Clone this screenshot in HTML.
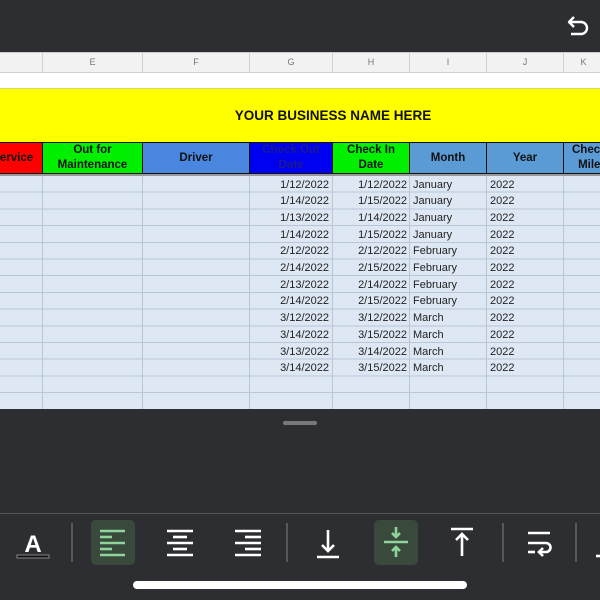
<!DOCTYPE html>
<html><head><meta charset="utf-8"><style>
*{margin:0;padding:0;box-sizing:border-box}
body{width:600px;height:600px;background:#2d2e32;position:relative;overflow:hidden;font-family:"Liberation Sans",sans-serif}
.a{position:absolute}
.ch{position:absolute;top:53px;height:19px;background:#f2f2f2;border-right:1px solid #d0d0d0;font-size:9px;color:#777;text-align:center;line-height:19px}
.hd{position:absolute;top:142px;height:32px;border:1.5px solid #111;font-size:11.5px;font-weight:bold;color:#111;display:flex;align-items:center;justify-content:center;text-align:center;line-height:15px}
.c{position:absolute;height:16.7px;font-size:11px;color:#222;line-height:16.7px;white-space:nowrap}
</style></head><body>
<svg class="a" style="left:566px;top:14px" width="26" height="26" viewBox="0 0 26 26"><path d="M8 3 L3 8 L8 13 M3 8 H15 A6 6 0 0 1 15 20 H5" fill="none" stroke="#fff" stroke-width="2.4" stroke-linejoin="round"/></svg>
<div class="a" style="left:0;top:52px;width:600px;height:357px;background:#fff"></div>
<div class="a" style="left:0;top:52px;width:600px;height:1px;background:#ccc"></div>
<div class="ch" style="left:0;width:43px"></div>
<div class="ch" style="left:43px;width:100px">E</div>
<div class="ch" style="left:143px;width:107px">F</div>
<div class="ch" style="left:250px;width:83px">G</div>
<div class="ch" style="left:333px;width:77px">H</div>
<div class="ch" style="left:410px;width:77px">I</div>
<div class="ch" style="left:487px;width:77px">J</div>
<div class="ch" style="left:564px;width:40px">K</div>
<div class="a" style="left:0;top:72px;width:600px;height:1px;background:#d0d0d0"></div>
<div class="a" style="left:0;top:88px;width:600px;height:54px;background:#ffff00;border-top:1px solid #d8d870;font-size:13.5px;font-weight:bold;color:#111;text-align:center;line-height:54px;padding-left:66px">YOUR BUSINESS NAME HERE</div>
<div class="hd" style="left:-10px;width:53px;background:#ff0000">ervice</div>
<div class="hd" style="left:42px;width:101px;background:#00f000">Out for<br>Maintenance</div>
<div class="hd" style="left:142px;width:108px;background:#4a86e0">Driver</div>
<div class="hd" style="left:249px;width:84px;background:#0000f0;color:#1a1a90">Check Out<br>Date</div>
<div class="hd" style="left:332px;width:78px;background:#00f000">Check In<br>Date</div>
<div class="hd" style="left:409px;width:78px;background:#5b9bd5">Month</div>
<div class="hd" style="left:486px;width:78px;background:#5b9bd5">Year</div>
<div class="hd" style="left:563px;width:60px;background:#5b9bd5;justify-content:flex-start;padding-left:8px">Check<br>Mile</div>
<div class="a" style="left:0;top:174px;width:600px;height:2px;background:#999"></div>
<div class="a" style="left:0;top:176px;width:600px;height:233px;background:#dde8f4;
background-image:repeating-linear-gradient(to bottom,transparent 0,transparent 15.7px,#b9c6d3 15.7px,#b9c6d3 16.7px)"></div>
<div class="a" style="left:42px;top:176px;width:1px;height:233px;background:#b9c6d3"></div>
<div class="a" style="left:142px;top:176px;width:1px;height:233px;background:#b9c6d3"></div>
<div class="a" style="left:249px;top:176px;width:1px;height:233px;background:#b9c6d3"></div>
<div class="a" style="left:332px;top:176px;width:1px;height:233px;background:#b9c6d3"></div>
<div class="a" style="left:409px;top:176px;width:1px;height:233px;background:#b9c6d3"></div>
<div class="a" style="left:486px;top:176px;width:1px;height:233px;background:#b9c6d3"></div>
<div class="a" style="left:563px;top:176px;width:1px;height:233px;background:#b9c6d3"></div>
<div id="d"></div>
<script>
var r=[["1/12/2022","1/12/2022","January"],["1/14/2022","1/15/2022","January"],["1/13/2022","1/14/2022","January"],["1/14/2022","1/15/2022","January"],["2/12/2022","2/12/2022","February"],["2/14/2022","2/15/2022","February"],["2/13/2022","2/14/2022","February"],["2/14/2022","2/15/2022","February"],["3/12/2022","3/12/2022","March"],["3/14/2022","3/15/2022","March"],["3/13/2022","3/14/2022","March"],["3/14/2022","3/15/2022","March"]];
var h="";r.forEach(function(x,i){var t=176.5+i*16.7;
h+='<div class="c" style="left:250px;width:79px;text-align:right;top:'+t+'px">'+x[0]+'</div>';
h+='<div class="c" style="left:333px;width:74px;text-align:right;top:'+t+'px">'+x[1]+'</div>';
h+='<div class="c" style="left:413px;top:'+t+'px">'+x[2]+'</div>';
h+='<div class="c" style="left:490px;top:'+t+'px">2022</div>';});
document.getElementById("d").innerHTML=h;
</script>
<div class="a" style="left:283px;top:421px;width:34px;height:4px;border-radius:2px;background:#77787c"></div>
<div class="a" style="left:0;top:513px;width:600px;height:1px;background:#55565a"></div>
<svg class="a" style="left:0;top:514px" width="600" height="86" viewBox="0 514 600 86">
<g fill="none" stroke-linecap="butt">
<text x="33" y="552" font-family="Liberation Sans" font-size="24" font-weight="bold" fill="#fff" text-anchor="middle">A</text>
<rect x="17" y="555" width="32" height="3" fill="#111" stroke="#888" stroke-width="1"/>
<line x1="72" y1="523" x2="72" y2="562" stroke="#666" stroke-width="1.5"/>
<rect x="91" y="520" width="44" height="45" rx="5" fill="#394a3d"/>
<g stroke="#8fd49a" stroke-width="2.6"><line x1="100" y1="531" x2="125" y2="531"/><line x1="100" y1="537" x2="112" y2="537"/><line x1="100" y1="543" x2="125" y2="543"/><line x1="100" y1="549" x2="112" y2="549"/><line x1="100" y1="555" x2="125" y2="555"/></g>
<g stroke="#fff" stroke-width="2.6"><line x1="167" y1="531" x2="193" y2="531"/><line x1="173" y1="537" x2="187" y2="537"/><line x1="167" y1="543" x2="193" y2="543"/><line x1="173" y1="549" x2="187" y2="549"/><line x1="167" y1="555" x2="193" y2="555"/></g>
<g stroke="#fff" stroke-width="2.6"><line x1="235" y1="531" x2="261" y2="531"/><line x1="245" y1="537" x2="261" y2="537"/><line x1="235" y1="543" x2="261" y2="543"/><line x1="245" y1="549" x2="261" y2="549"/><line x1="235" y1="555" x2="261" y2="555"/></g>
<line x1="287" y1="523" x2="287" y2="562" stroke="#666" stroke-width="1.5"/>
<g stroke="#fff" stroke-width="2.6"><line x1="328" y1="530" x2="328" y2="550"/><path d="M322 545 L328 551 L334 545"/><line x1="317" y1="557" x2="339" y2="557"/></g>
<rect x="374" y="520" width="44" height="45" rx="5" fill="#394a3d"/>
<g stroke="#8fd49a" stroke-width="2.6"><line x1="384" y1="542" x2="408" y2="542"/><line x1="396" y1="527" x2="396" y2="537"/><path d="M392 533 L396 537 L400 533"/><line x1="396" y1="547" x2="396" y2="557"/><path d="M392 551 L396 547 L400 551"/></g>
<g stroke="#fff" stroke-width="2.6"><line x1="451" y1="529" x2="473" y2="529"/><line x1="462" y1="535" x2="462" y2="556"/><path d="M456 540 L462 534 L468 540"/></g>
<line x1="503" y1="523" x2="503" y2="562" stroke="#666" stroke-width="1.5"/>
<g stroke="#fff" stroke-width="2.6"><line x1="528" y1="533" x2="550" y2="533"/><line x1="528" y1="543" x2="546" y2="543"/><line x1="528" y1="552" x2="535" y2="552"/><path d="M546 543 A4.5 4.5 0 0 1 546 552 L540 552"/><path d="M543 548 L539 552 L543 556"/></g>
<line x1="576" y1="523" x2="576" y2="562" stroke="#666" stroke-width="1.5"/>
<line x1="596" y1="556" x2="600" y2="556" stroke="#fff" stroke-width="2.6"/>
</g>
<rect x="133" y="581" width="334" height="8" rx="4" fill="#fff"/>
</svg>
</body></html>
